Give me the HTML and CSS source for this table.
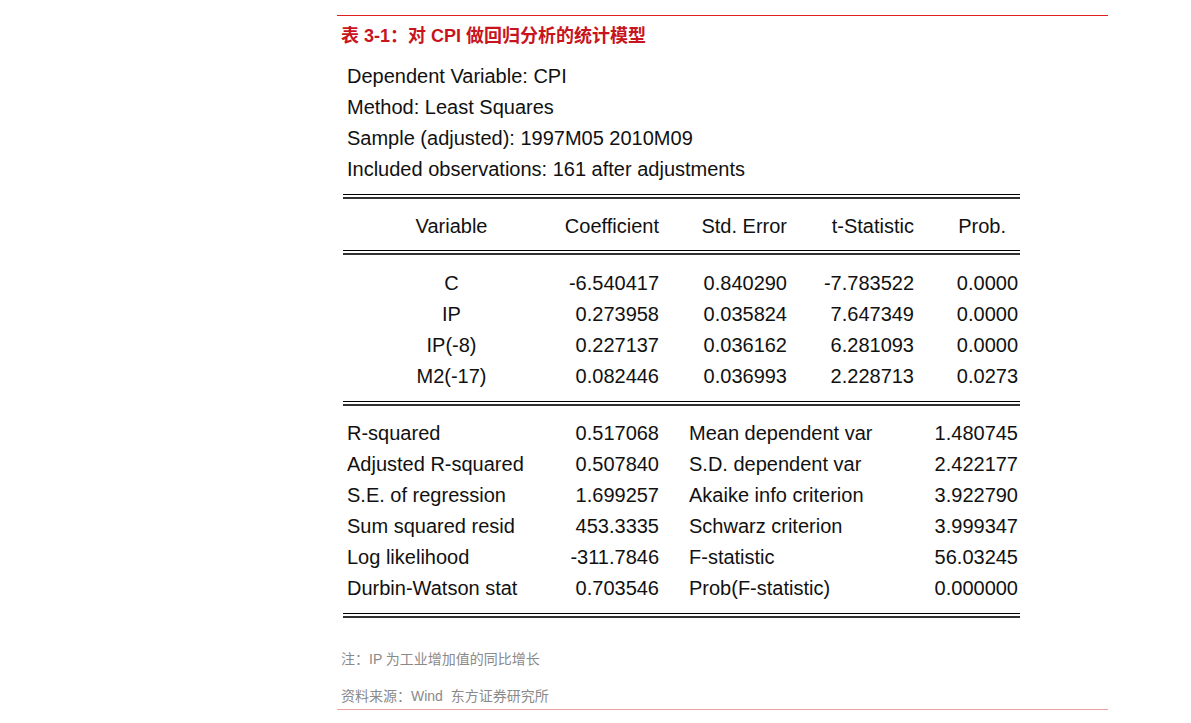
FILE: index.html
```html
<!DOCTYPE html>
<html lang="zh-CN">
<head>
<meta charset="utf-8">
<title>表 3-1</title>
<link rel="stylesheet" href="styles.css">
</head>
<body>
<div class="page">
  <div class="title">表 3-1：对 CPI 做回归分析的统计模型</div>
  <div class="meta">
    <div>Dependent Variable: CPI</div>
    <div>Method: Least Squares</div>
    <div>Sample (adjusted): 1997M05 2010M09</div>
    <div>Included observations: 161 after adjustments</div>
  </div>
  <div class="table">
    <div class="dbl"></div>
    <div class="grid head">
      <div class="c1">Variable</div>
      <div class="cn">Coefficient</div>
      <div class="cn">Std. Error</div>
      <div class="cn">t-Statistic</div>
      <div class="cn prob">Prob.</div>
    </div>
    <div class="dbl"></div>
    <div class="grid body">
      <div class="c1">C</div><div class="cn">-6.540417</div><div class="cn">0.840290</div><div class="cn">-7.783522</div><div class="cn last">0.0000</div>
      <div class="c1">IP</div><div class="cn">0.273958</div><div class="cn">0.035824</div><div class="cn">7.647349</div><div class="cn last">0.0000</div>
      <div class="c1">IP(-8)</div><div class="cn">0.227137</div><div class="cn">0.036162</div><div class="cn">6.281093</div><div class="cn last">0.0000</div>
      <div class="c1">M2(-17)</div><div class="cn">0.082446</div><div class="cn">0.036993</div><div class="cn">2.228713</div><div class="cn last">0.0273</div>
    </div>
    <div class="dbl"></div>
    <div class="stats">
      <div class="sl">R-squared</div><div class="sv">0.517068</div><div class="sl2">Mean dependent var</div><div class="sv last">1.480745</div>
      <div class="sl">Adjusted R-squared</div><div class="sv">0.507840</div><div class="sl2">S.D. dependent var</div><div class="sv last">2.422177</div>
      <div class="sl">S.E. of regression</div><div class="sv">1.699257</div><div class="sl2">Akaike info criterion</div><div class="sv last">3.922790</div>
      <div class="sl">Sum squared resid</div><div class="sv">453.3335</div><div class="sl2">Schwarz criterion</div><div class="sv last">3.999347</div>
      <div class="sl">Log likelihood</div><div class="sv">-311.7846</div><div class="sl2">F-statistic</div><div class="sv last">56.03245</div>
      <div class="sl">Durbin-Watson stat</div><div class="sv">0.703546</div><div class="sl2">Prob(F-statistic)</div><div class="sv last">0.000000</div>
    </div>
    <div class="dbl"></div>
  </div>
  <div class="notes">
    <div class="note">注：IP 为工业增加值的同比增长</div>
    <div class="note src">资料来源：Wind&nbsp; 东方证券研究所</div>
  </div>
</div>
</body>
</html>
```
FILE: styles.css
```css
html, body {
  margin: 0;
  padding: 0;
  background: #fff;
}
body {
  font-family: "Liberation Sans", Arial, "Noto Sans CJK SC", sans-serif;
  color: #111;
}
.page {
  margin-left: 337px;
  width: 771px;
  margin-top: 15px;
  border-top: 1px solid #e21f1f;
  border-bottom: 1px solid #eea0a0;
  padding-bottom: 3px;
}
.title {
  margin-top: 8px;
  padding-left: 4px;
  height: 24px;
  line-height: 24px;
  font-size: 18px;
  font-weight: bold;
  color: #c8141c;
}
.meta {
  margin-top: 13px;
  padding-left: 10px;
  font-size: 20px;
  line-height: 31px;
}
.table {
  margin-top: 9px;
  margin-left: 6px;
  width: 677px;
  font-size: 20px;
  line-height: 31px;
}
.dbl {
  height: 2px;
  border-top: 1px solid #000;
  border-bottom: 2px solid #333;
}
.grid {
  display: grid;
  grid-template-columns: 217px 103px 128px 127px 102px;
}
.head {
  box-sizing: border-box;
  height: 51px;
  padding-top: 3px;
  align-items: center;
}
.body {
  padding: 13px 0 9px;
}
.c1 {
  text-align: center;
}
.cn {
  text-align: right;
  padding-right: 4px;
}
.cn.last {
  padding-right: 2px;
}
.cn.prob {
  padding-right: 14px;
}
.stats {
  display: grid;
  grid-template-columns: 217px 103px 255px 102px;
  padding: 12px 0 9px;
}
.sl {
  padding-left: 4px;
}
.sv {
  text-align: right;
  padding-right: 4px;
}
.sv.last {
  padding-right: 2px;
}
.sl2 {
  padding-left: 26px;
}
.notes {
  padding-left: 4px;
  margin-top: 31px;
  font-size: 14px;
  line-height: 20px;
  color: #8a8a8a;
}
.note.src {
  margin-top: 17px;
}
```
